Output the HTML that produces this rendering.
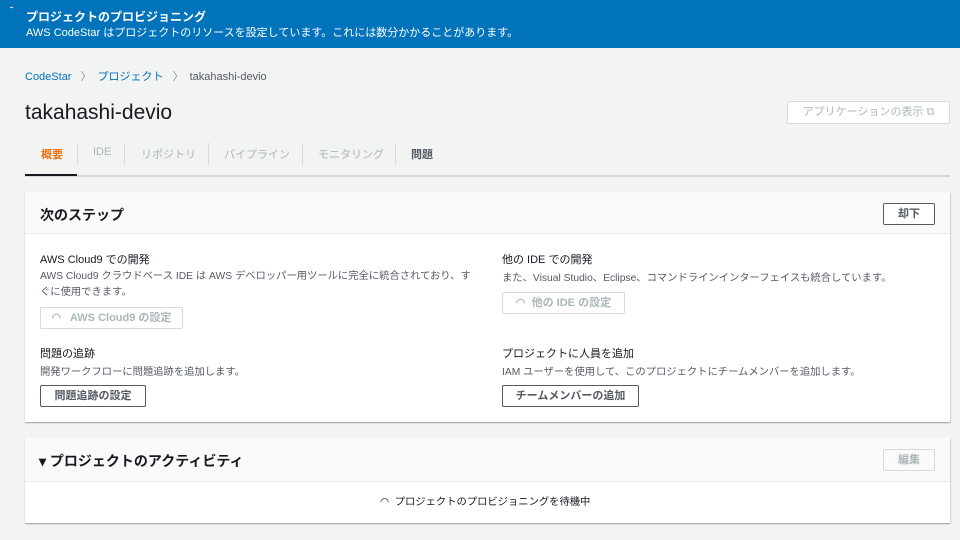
<!DOCTYPE html>
<html><head><meta charset="utf-8"><style>
*{margin:0;padding:0;box-sizing:border-box}
body{width:960px;height:540px;overflow:hidden;background:#f2f3f3;font-family:"Liberation Sans","Noto Sans CJK JP",sans-serif;color:#16191f;position:relative}
.a{position:absolute;white-space:nowrap}
.banner{position:absolute;left:0;top:0;width:960px;height:48px;background:#0073bb;color:#fff}
.btn{position:absolute;border:1px solid #545b64;background:#fff;font-size:11px;font-weight:bold;color:#545b64;text-align:center;border-radius:2px}
.dis{border-color:#d5dbdb;color:#aab7b8}
.card{position:absolute;left:25px;width:925px;background:#fff;box-shadow:0 1px 1px rgba(0,28,36,.3),1px 1px 1px rgba(0,28,36,.1)}
.hd{background:#fafafa;border-bottom:1px solid #eaeded;position:absolute;left:0;top:0;width:100%}
.t{font-size:11px;color:#16191f}
.d{font-size:10.3px;color:#545b64}
.tab{position:absolute;top:146px;font-size:11px;color:#aab7b8}
.sep{position:absolute;top:143px;width:1px;height:22px;background:#d5dbdb}
</style></head><body>
<div class="banner">
<div class="a" style="left:10px;top:6px;font-size:10px">˜</div>
<div class="a" style="left:26px;top:8px;font-size:12px;font-weight:bold">プロジェクトのプロビジョニング</div>
<div class="a" style="left:26px;top:24px;font-size:11px">AWS CodeStar はプロジェクトのリソースを設定しています。これには数分かかることがあります。</div>
</div>
<div class="a" style="left:25px;top:68px;font-size:11px;color:#0073bb">CodeStar <span style="color:#879596;margin:0 6px">〉</span>プロジェクト <span style="color:#879596;margin:0 6px">〉</span><span style="color:#545b64">takahashi-devio</span></div>
<div class="a" style="left:25px;top:101px;font-size:21px">takahashi-devio</div>
<div class="btn dis" style="left:787px;top:101px;width:163px;height:23px;line-height:21px;font-weight:normal;color:#aab7b8">アプリケーションの表示 ⧉</div>
<div class="tab" style="left:41px;color:#ec7211;font-weight:bold">概要</div>
<div class="sep" style="left:77px"></div>
<div class="tab" style="left:93px">IDE</div>
<div class="sep" style="left:124px"></div>
<div class="tab" style="left:141px">リポジトリ</div>
<div class="sep" style="left:208px"></div>
<div class="tab" style="left:224px">パイプライン</div>
<div class="sep" style="left:302px"></div>
<div class="tab" style="left:318px">モニタリング</div>
<div class="sep" style="left:395px"></div>
<div class="tab" style="left:411px;color:#545b64;font-weight:bold">問題</div>
<div class="a" style="left:25px;top:175px;width:925px;height:2px;background:#d5dbdb"></div>
<div class="a" style="left:25px;top:174px;width:52px;height:2px;background:#16191f"></div>

<div class="card" style="top:192px;height:230px">
<div class="hd" style="height:42px"></div>
<div class="a" style="left:15px;top:13px;font-size:14px;font-weight:bold">次のステップ</div>
<div class="btn" style="left:858px;top:11px;width:52px;height:22px;line-height:20px">却下</div>
<div class="a t" style="left:15px;top:59px">AWS Cloud9 での開発</div>
<div class="a d" style="left:15px;top:77px;line-height:16px">AWS Cloud9 クラウドベース IDE は AWS デベロッパー用ツールに完全に統合されており、す<br>ぐに使用できます。</div>
<div class="btn dis" style="left:15px;top:115px;width:143px;height:22px;line-height:20px">◠&nbsp;&nbsp; AWS Cloud9 の設定</div>
<div class="a t" style="left:15px;top:153px">問題の追跡</div>
<div class="a d" style="left:15px;top:171px">開発ワークフローに問題追跡を追加します。</div>
<div class="btn" style="left:15px;top:193px;width:106px;height:22px;line-height:20px">問題追跡の設定</div>
<div class="a t" style="left:477px;top:59px">他の IDE での開発</div>
<div class="a d" style="left:477px;top:77px">また、Visual Studio、Eclipse、コマンドラインインターフェイスも統合しています。</div>
<div class="btn dis" style="left:477px;top:100px;width:123px;height:22px;line-height:20px">◠&nbsp; 他の IDE の設定</div>
<div class="a t" style="left:477px;top:153px">プロジェクトに人員を追加</div>
<div class="a d" style="left:477px;top:171px">IAM ユーザーを使用して、このプロジェクトにチームメンバーを追加します。</div>
<div class="btn" style="left:477px;top:193px;width:137px;height:22px;line-height:20px">チームメンバーの追加</div>
</div>

<div class="card" style="top:438px;height:85px">
<div class="hd" style="height:44px"></div>
<div class="a" style="left:14px;top:13px;font-size:14px;font-weight:bold">▾ プロジェクトのアクティビティ</div>
<div class="btn dis" style="left:858px;top:11px;width:52px;height:22px;line-height:20px;background:#fafafa">編集</div>
<div class="a d" style="left:355px;top:55px;color:#16191f">◠&nbsp; プロジェクトのプロビジョニングを待機中</div>
</div>
</body></html>
